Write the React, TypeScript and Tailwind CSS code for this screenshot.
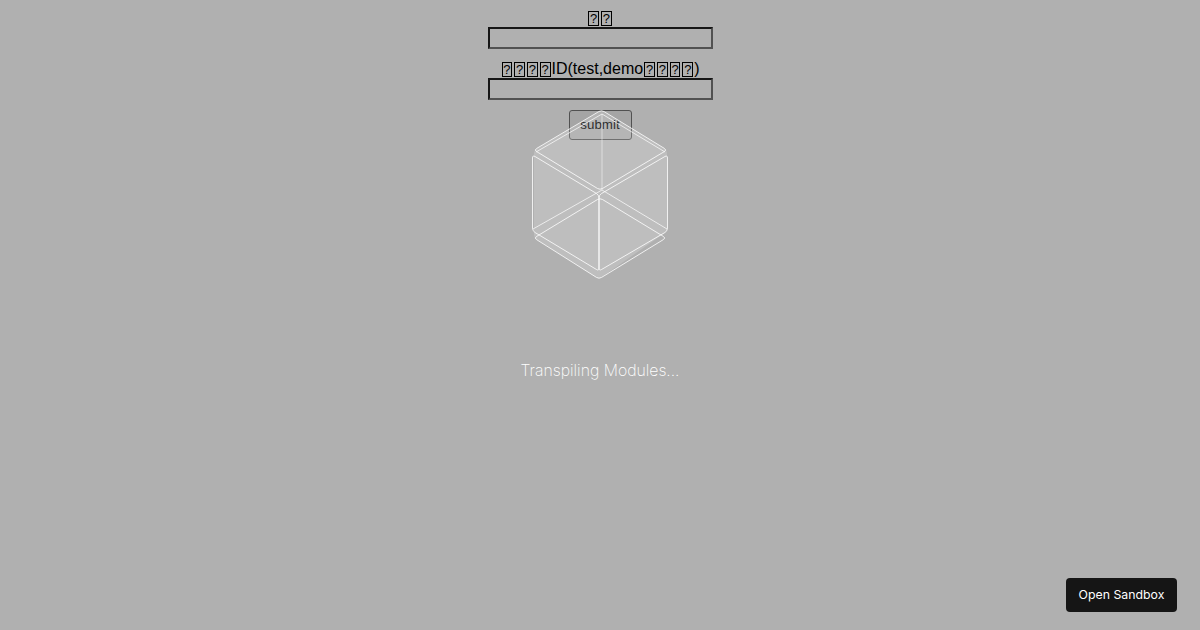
const faces = [
  // top and bottom
  [[534, 150], [601.5, 110], [667, 150], [600, 190]],
  [[534, 238], [600, 198], [666, 238], [599, 279]],
  // front
  [[532.5, 155], [599, 195], [599, 271], [532.5, 231]],
  [[599, 195], [667.5, 155], [667.5, 231], [599, 271]],
];

const hull = [[534, 150], [601.5, 110], [667, 150], [667.5, 231], [599, 279], [534, 238]];

// polygon with small rounded corners
function roundedPath(points: number[][], r = 3) {
  let d = "";
  points.forEach((p, i) => {
    const prev = points[(i + points.length - 1) % points.length];
    const next = points[(i + 1) % points.length];
    const toward = (a: number[], b: number[]) => {
      const len = Math.hypot(b[0] - a[0], b[1] - a[1]);
      return [a[0] + ((b[0] - a[0]) / len) * r, a[1] + ((b[1] - a[1]) / len) * r];
    };
    const s = toward(p, prev);
    const e = toward(p, next);
    d += `${i === 0 ? "M" : "L"}${s[0]} ${s[1]} Q${p[0]} ${p[1]} ${e[0]} ${e[1]} `;
  });
  return d + "Z";
}

function Tofu() {
  return (
    <span className="inline-flex w-[10.75px] h-[15px] mx-[1px] border border-black items-center justify-center align-[0px] text-[13px] leading-none">
      ?
    </span>
  );
}

function Field({ label }: { label: React.ReactNode }) {
  return (
    <div className="flex flex-col items-center">
      <label className="block h-[19px] text-[16px] leading-[19px] text-black">{label}</label>
      <input className="w-[225px] h-[22px] border-2 [border-style:inset] border-[#767676] bg-white" />
    </div>
  );
}

export default function App() {
  return (
    <div className="relative h-screen w-full overflow-hidden bg-white font-['Liberation_Sans',sans-serif]">
      <form className="flex flex-col items-center gap-[10px] pt-2">
        <Field
          label={
            <>
              <Tofu />
              <Tofu />
            </>
          }
        />
        <Field
          label={
            <>
              <Tofu />
              <Tofu />
              <Tofu />
              <Tofu />
              ID(test,demo
              <Tofu />
              <Tofu />
              <Tofu />
              <Tofu />)
            </>
          }
        />
        <button
          type="button"
          className="w-[63px] h-[30px] rounded-[3px] border border-[#767676] bg-[#efefef] text-[13.33px] text-black"
        >
          submit
        </button>
      </form>

      {/* loading overlay */}
      <div className="absolute inset-0 flex flex-col items-center bg-black/[.31] pt-[105px] font-['Inter',sans-serif]">
        <svg width="160" height="180" viewBox="520 105 160 180" fill="none">
          <path d={roundedPath(hull)} fill="#fff" fillOpacity={0.18} />
          {/* back of the cube */}
          <path
            d="M536 152 L602 114 L665 152 M533 229 L602 190 L667 229"
            stroke="#fff"
            strokeOpacity={0.7}
          />
          <path d="M602 114 V190" stroke="#fff" strokeOpacity={0.5} />
          {faces.map((f, i) => (
            <path key={i} d={roundedPath(f)} stroke="#fff" strokeOpacity={0.8} />
          ))}
        </svg>
        <p className="mt-[76px] text-[15.8px] leading-[19px] font-extralight text-white">
          Transpiling Modules...
        </p>
      </div>

      <button
        type="button"
        className="absolute right-[23px] bottom-[18px] w-[111px] h-[34px] rounded-[4px] bg-[#151515] text-[12.3px] text-white font-['Inter',sans-serif]"
      >
        Open Sandbox
      </button>
    </div>
  );
}
